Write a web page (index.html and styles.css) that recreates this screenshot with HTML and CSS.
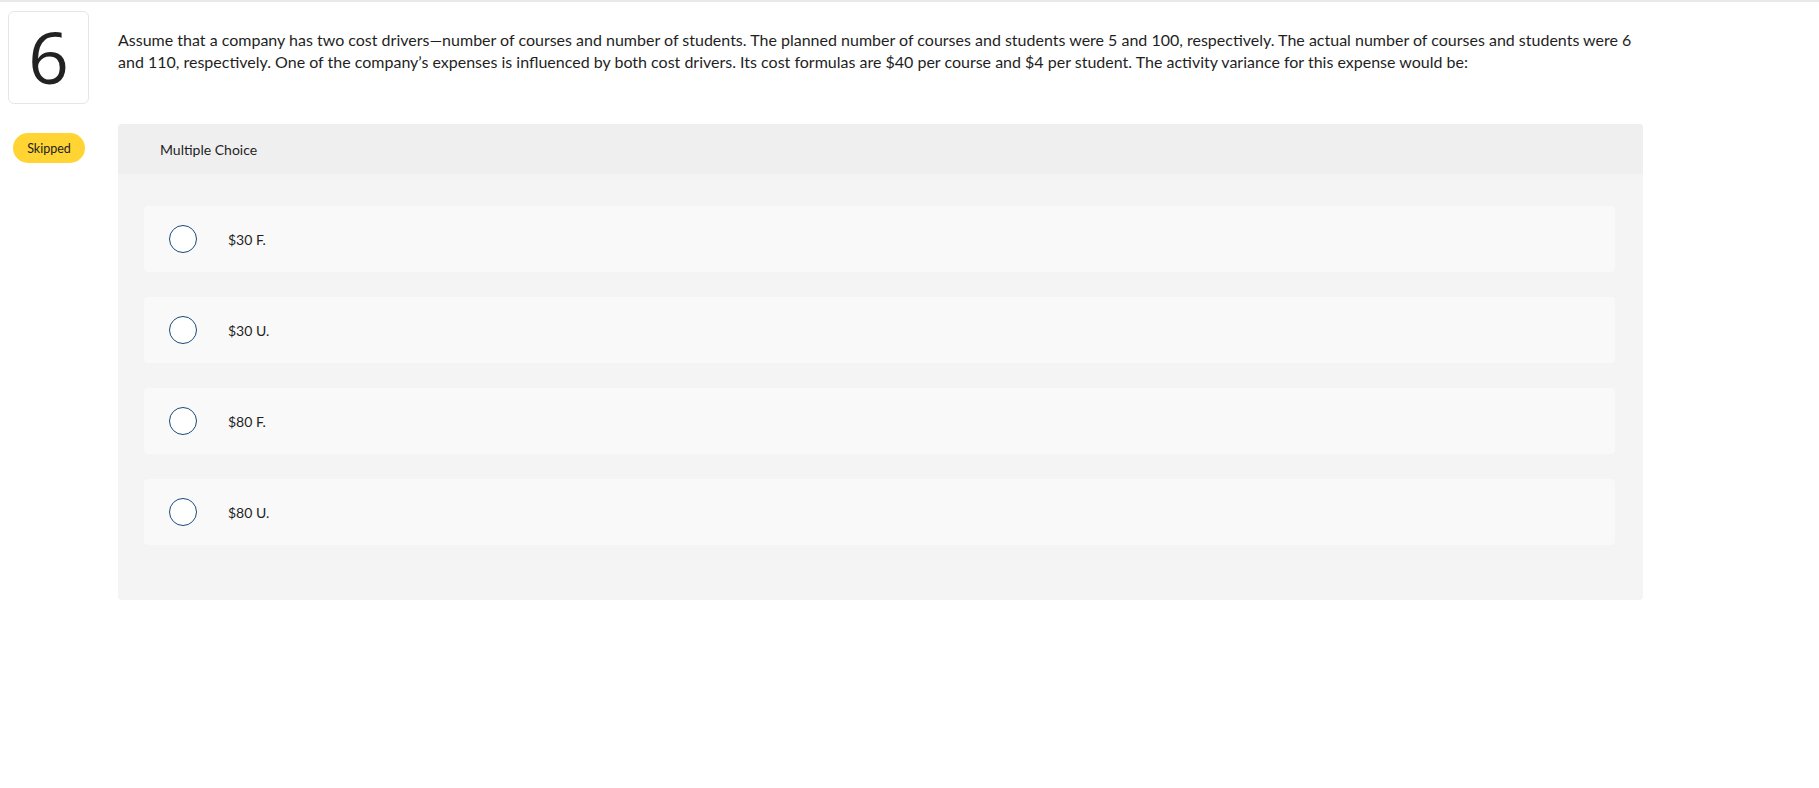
FILE: index.html
```html
<!DOCTYPE html>
<html lang="en">
<head>
<meta charset="utf-8">
<title>Question 6</title>
<link rel="stylesheet" href="styles.css">
</head>
<body>
<div class="topline"></div>
<div class="page">
  <aside class="side">
    <div class="num-box"><span class="num">6</span></div>
    <div class="pill">Skipped</div>
  </aside>
  <main class="main">
    <p class="question">Assume that a company has two cost drivers—number of courses and number of students. The planned number of courses and students were 5 and 100, respectively. The actual number of courses and students were 6 and 110, respectively. One of the company’s expenses is influenced by both cost drivers. Its cost formulas are $40 per course and $4 per student. The activity variance for this expense would be:</p>
    <section class="panel">
      <div class="panel-head">Multiple Choice</div>
      <div class="panel-body">
        <div class="choice"><span class="radio"></span><span class="label">$30 F.</span></div>
        <div class="choice"><span class="radio"></span><span class="label">$30 U.</span></div>
        <div class="choice"><span class="radio"></span><span class="label">$80 F.</span></div>
        <div class="choice"><span class="radio"></span><span class="label">$80 U.</span></div>
      </div>
    </section>
  </main>
</div>
</body>
</html>
```
FILE: styles.css
```css
html, body {
  margin: 0;
  padding: 0;
  background: #ffffff;
}
body {
  font-family: "Lato", "Liberation Sans", sans-serif;
  color: #1f1f1f;
}
.topline {
  height: 2px;
  background: #e9e9e9;
}
.page {
  display: flex;
  align-items: flex-start;
}
.side {
  width: 118px;
  flex: none;
  box-sizing: border-box;
  padding-left: 8px;
  padding-top: 9px;
  display: flex;
  flex-direction: column;
  align-items: flex-start;
}
.num-box {
  width: 81px;
  height: 93px;
  box-sizing: border-box;
  border: 1px solid #e6e6e6;
  border-radius: 6px;
  display: flex;
  align-items: center;
  justify-content: center;
  padding-bottom: 2px;
}
.num {
  font-family: "Open Sans", "Lato", sans-serif;
  font-size: 71px;
  line-height: 1;
  color: #222222;
}
.pill {
  margin-top: 29px;
  margin-left: 5px;
  width: 72px;
  height: 30px;
  border-radius: 15px;
  background: #ffd433;
  display: flex;
  align-items: center;
  justify-content: center;
  font-size: 12.5px;
  color: #222222;
}
.main {
  width: 1525px;
  flex: none;
  padding-top: 27px;
}
.question {
  margin: 0;
  font-size: 16px;
  line-height: 22px;
}
.panel {
  margin-top: 51px;
  background: #f4f4f4;
  border-radius: 4px;
  overflow: hidden;
}
.panel-head {
  height: 50px;
  background: #efefef;
  display: flex;
  align-items: center;
  padding-left: 42px;
  font-size: 14px;
}
.panel-body {
  padding: 32px 28px 30px 26px;
}
.choice {
  height: 66px;
  background: #f9f9f9;
  border-radius: 4px;
  margin-bottom: 25px;
  display: flex;
  align-items: center;
  padding-left: 25px;
}
.radio {
  width: 28px;
  height: 28px;
  box-sizing: border-box;
  border: 1.5px solid #174a7c;
  border-radius: 50%;
  background: #ffffff;
  flex: none;
}
.label {
  margin-left: 31px;
  font-size: 14px;
}
```
